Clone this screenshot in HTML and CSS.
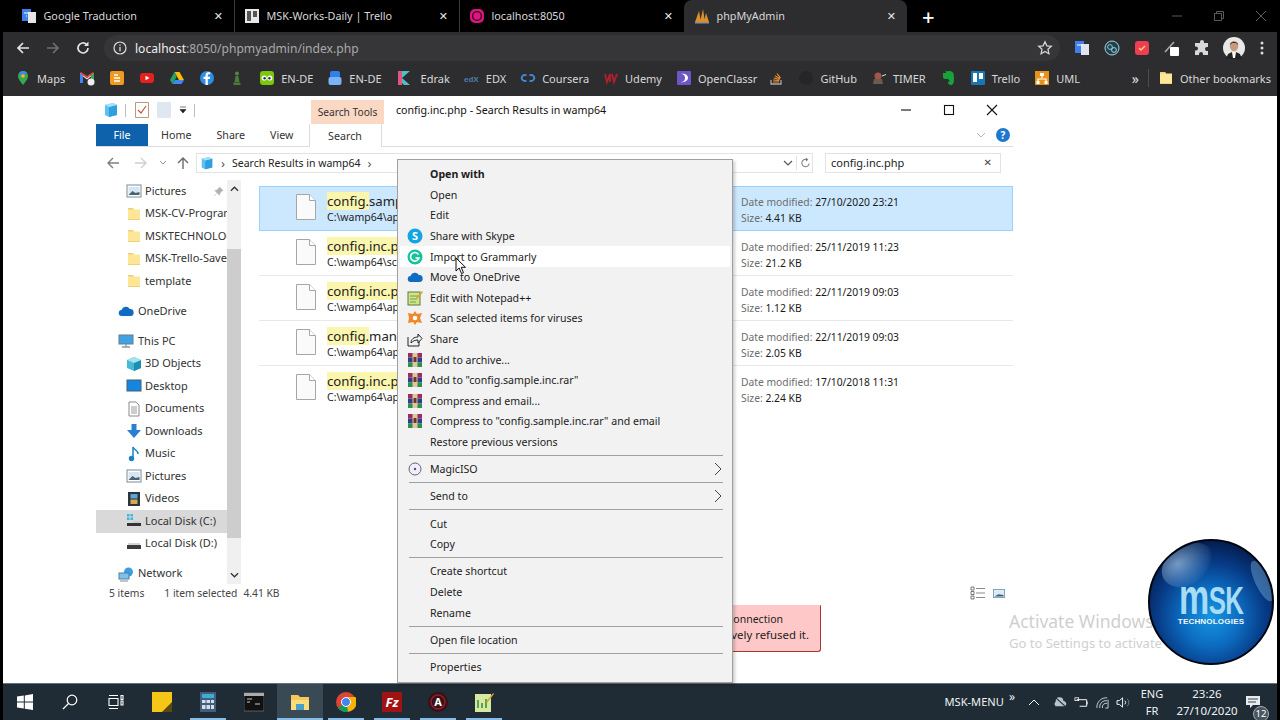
FILE: index.html
```html
<!DOCTYPE html>
<html lang="en">
<head>
<meta charset="utf-8">
<title>phpMyAdmin</title>
<link rel="stylesheet" href="styles.css">
</head>
<body>
<svg class="defs" width="0" height="0" aria-hidden="true">
  <symbol id="folder" viewBox="0 0 16 16"><path d="M2 2h5l1 1.500h6V14H2z" fill="#fde796"/><path d="M2 2h5l1 1.500H2z" fill="#ecd17a"/><path d="M2 14h12v-1H2z" fill="#ecd17a"/></symbol>
  <symbol id="file" viewBox="0 0 20 26"><path d="M.5.5h13l6 6v19H.5z" fill="#fafafa" stroke="#a6a6a6"/><path d="M13.5.5v6h6" fill="#fff" stroke="#a6a6a6"/></symbol>
  <symbol id="rar" viewBox="0 0 16 16"><rect x="1" y="1" width="14" height="4.500" fill="#a12a5a"/><rect x="1" y="5.500" width="14" height="5" fill="#2f3f8f"/><rect x="1" y="10.500" width="14" height="4.500" fill="#2f8f46"/><rect x="5.500" y="1" width="5" height="14" fill="#d8c9a0"/><rect x="6.500" y="5" width="3" height="5" fill="#7a3020"/></symbol>
  <symbol id="cube" viewBox="0 0 16 16"><path d="M2 3l8-2 4 2v10l-8 2-4-2z" fill="#5cc0f0"/><path d="M6 5l8-2v10l-8 2z" fill="#2f9fe0"/><path d="M2 3l8-2 4 2-8 2z" fill="#a8e0fa"/></symbol>
  <symbol id="picture" viewBox="0 0 16 16"><rect x="1" y="2" width="14" height="12" fill="#fff" stroke="#7a8a99"/><rect x="2.500" y="4" width="11" height="8" fill="#d5e6f2"/><path d="M2.500 12l4-4 3 2 4-1v3z" fill="#4a6170"/></symbol>
  <symbol id="cloud" viewBox="0 0 16 12"><path d="M4 11a3 3 0 0 1-.5-6A4.500 4.500 0 0 1 11.800 4 3.500 3.500 0 0 1 12.500 11z" fill="#0f6cc0"/></symbol>
  <symbol id="pc" viewBox="0 0 16 16"><rect x="1" y="2" width="14" height="9" fill="#3ea2e4" stroke="#6b7c88"/><path d="M4 14h8M8 11v3" stroke="#8a9aa6" stroke-width="1.400"/></symbol>
  <symbol id="drive" viewBox="0 0 16 16"><rect x="1" y="9" width="14" height="4" fill="#3b3b3b"/><rect x="2" y="7" width="12" height="2" fill="#d5d5d5"/></symbol>
</svg>

<div class="tabs">
  <div class="tab">
    <svg class="tab-ic" viewBox="0 0 16 16"><rect x="1" y="1" width="9" height="12" fill="#3f7fe8"/><rect x="7" y="4" width="8" height="11" fill="#e5e5e5"/><path d="M3 5h5M5 8h1" stroke="#fff"/></svg>
    <span class="tab-t">Google Traduction</span><span class="tab-x">✕</span>
  </div>
  <div class="tab tab-sep">
    <svg class="tab-ic" viewBox="0 0 16 16"><rect x="1" y="1" width="14" height="14" fill="#e8e8e8"/><rect x="3" y="3" width="4" height="10" fill="#555"/><rect x="9" y="3" width="4" height="6" fill="#555"/></svg>
    <span class="tab-t">MSK-Works-Daily | Trello</span><span class="tab-x">✕</span>
  </div>
  <div class="tab tab-sep">
    <svg class="tab-ic" viewBox="0 0 16 16"><rect x="1" y="1" width="14" height="14" rx="5" fill="#e0147e"/><circle cx="8" cy="8" r="4.400" fill="none" stroke="#2a0a1c" stroke-width="1.400"/></svg>
    <span class="tab-t">localhost:8050</span><span class="tab-x">✕</span>
  </div>
  <div class="tab tab-sep tab-active">
    <svg class="tab-ic" viewBox="0 0 16 16"><path d="M1 14L5 3l2 11zM6 14L9 1l2 13zM10 14l2-9 3 9z" fill="#d9902c"/><path d="M1 14h14v1.500H1z" fill="#8e8e9a"/></svg>
    <span class="tab-t">phpMyAdmin</span><span class="tab-x">✕</span>
  </div>
  <span class="tab-new">+</span>
  <div class="winctl">
    <svg class="winctl-ic" viewBox="0 0 12 12"><path d="M1 6h10" stroke="#5a5a5a"/></svg>
    <svg class="winctl-ic" viewBox="0 0 12 12"><path d="M1.500 3.500h7v7h-7zM3.500 3.500v-2h7v7h-2" fill="none" stroke="#5a5a5a"/></svg>
    <svg class="winctl-ic" viewBox="0 0 12 12"><path d="M1 1l10 10M11 1L1 11" stroke="#5a5a5a"/></svg>
  </div>
</div>

<div class="toolbar">
  <svg class="tb-ic tb-back" viewBox="0 0 16 16"><path d="M14 8H3M8 3L3 8l5 5" fill="none" stroke="#e3e3e3" stroke-width="1.700"/></svg>
  <svg class="tb-ic" viewBox="0 0 16 16"><path d="M2 8h11M8 3l5 5-5 5" fill="none" stroke="#6f6f6f" stroke-width="1.700"/></svg>
  <svg class="tb-ic" viewBox="0 0 16 16"><path d="M13 8a5 5 0 1 1-1.500-3.600" fill="none" stroke="#e3e3e3" stroke-width="1.700"/><path d="M13.500 1.500v4.400H9z" fill="#e3e3e3"/></svg>
  <div class="omni">
    <svg class="omni-i" viewBox="0 0 14 14"><circle cx="7" cy="7" r="6" fill="none" stroke="#ddd" stroke-width="1.200"/><path d="M7 6v4.200M7 3.400v1.400" stroke="#ddd" stroke-width="1.300"/></svg>
    <span class="omni-host">localhost</span><span class="omni-rest">:8050/phpmyadmin/index.php</span>
    <svg class="omni-star" viewBox="0 0 16 16"><path d="M8 1.800l1.900 4 4.400.5-3.300 3 .9 4.400L8 11.500l-3.900 2.200.9-4.400-3.300-3 4.400-.5z" fill="none" stroke="#d5d5d5" stroke-width="1.300"/></svg>
  </div>
  <div class="exts">
    <svg class="ext" viewBox="0 0 16 16"><rect x="1" y="1" width="9" height="12" fill="#3f7fe8"/><rect x="7" y="4" width="8" height="11" fill="#dfe5ee"/><path d="M3 5h5" stroke="#fff"/></svg>
    <svg class="ext" viewBox="0 0 16 16"><circle cx="8" cy="8" r="7" fill="#21404f" stroke="#a5d6e6"/><circle cx="6" cy="7" r="2.400" fill="none" stroke="#8bd0a8"/><circle cx="10" cy="10" r="2.400" fill="none" stroke="#a5d6e6"/></svg>
    <svg class="ext" viewBox="0 0 16 16"><rect x="1" y="1" width="14" height="14" rx="3" fill="#ee3f52"/><path d="M5 8l2 2 4-4" stroke="#ffd27a" fill="none" stroke-width="1.300"/></svg>
    <svg class="ext" viewBox="0 0 16 16"><path d="M1 12L10 2" stroke="#aaa" stroke-width="1.600"/><rect x="6" y="7" width="9" height="9" rx="1" fill="#fff"/></svg>
    <svg class="ext" viewBox="0 0 16 16"><path d="M6 2a2 2 0 0 1 4 0v1h4v4h-1a2 2 0 0 0 0 4h1v4H9v-1a2 2 0 0 0-4 0v1H1v-4.500h1a2 2 0 0 0 0-4H1V3h5z" fill="#d8d8d8"/></svg>
    <svg class="ext ext-av" viewBox="0 0 22 22"><circle cx="11" cy="11" r="11" fill="#e8e8e8"/><path d="M3 22l2-5 4-2h4l4 2 2 5z" fill="#222"/><path d="M9 15h4l-1 6h-2z" fill="#fff"/><ellipse cx="11" cy="9" rx="4.200" ry="5.200" fill="#c99a80"/><path d="M6.800 8C7 4 15 4 15.200 8L13 6H9z" fill="#2a2320"/></svg>
    <svg class="ext ext-dots" viewBox="0 0 4 16"><circle cx="2" cy="3" r="1.500" fill="#ddd"/><circle cx="2" cy="8" r="1.500" fill="#ddd"/><circle cx="2" cy="13" r="1.500" fill="#ddd"/></svg>
  </div>
</div>

<div class="bookmarks">
  <span class="bm"><svg class="bm-i" viewBox="0 0 16 16"><path d="M8 1a5 5 0 0 1 5 5c0 3.500-5 9-5 9S3 9.500 3 6a5 5 0 0 1 5-5z" fill="#34a853"/><path d="M4 3.500A5 5 0 0 1 12 2.500L8 7z" fill="#4285f4"/><circle cx="8" cy="6" r="1.800" fill="#fbbc04"/></svg>Maps</span>
  <span class="bm bm-only"><svg class="bm-i" viewBox="0 0 16 16"><path d="M1 3v10h3V6.500L8 9.500l4-3V13h3V3l-7 5z" fill="#e5e5e5"/><path d="M1 3l3 2.500V13H1z" fill="#4285f4"/><path d="M15 3l-3 2.500V13h3z" fill="#34a853"/><path d="M1 3l7 5 7-5-1-1-6 4-6-4z" fill="#ea4335"/><circle cx="12" cy="12" r="3.500" fill="#eee"/></svg></span>
  <span class="bm bm-only"><svg class="bm-i" viewBox="0 0 16 16"><rect x="1" y="1" width="14" height="14" rx="2" fill="#f09a20"/><path d="M5 5h4M5 8h6M5 11h6" stroke="#fff" stroke-width="1.400"/></svg></span>
  <span class="bm bm-only"><svg class="bm-i" viewBox="0 0 16 16"><rect x="1" y="3" width="14" height="10" rx="3" fill="#e8201c"/><path d="M6.500 5.800v4.400L10.500 8z" fill="#fff"/></svg></span>
  <span class="bm bm-only"><svg class="bm-i" viewBox="0 0 16 16"><path d="M5.500 2h5L15 10H10z" fill="#fbbc04"/><path d="M5.500 2L1 10l2.500 4L8 6z" fill="#1fa463"/><path d="M3.500 14h9L15 10H6z" fill="#4285f4"/></svg></span>
  <span class="bm bm-only"><svg class="bm-i" viewBox="0 0 16 16"><circle cx="8" cy="8" r="7" fill="#2f8de4"/><path d="M8.800 15V9h2l.3-2.300H8.800V5.400c0-.7.2-1.100 1.200-1.100h1.200V2.300C10 2.100 6.500 1.800 6.500 5v1.700H4.500V9h2v6z" fill="#fff"/></svg></span>
  <span class="bm bm-only"><svg class="bm-i" viewBox="0 0 16 16"><circle cx="8" cy="3.500" r="2" fill="#4f8a3c"/><path d="M6.500 6h3l1 6h-5zM4.500 12.500h7V15h-7z" fill="#4f7a3c"/></svg></span>
  <span class="bm"><svg class="bm-i" viewBox="0 0 16 16"><rect x="1" y="1" width="14" height="14" rx="3" fill="#7ac70c"/><circle cx="5.200" cy="8" r="2.600" fill="#fff"/><circle cx="10.800" cy="8" r="2.600" fill="#fff"/><circle cx="5.600" cy="8.300" r="1.200" fill="#234"/><circle cx="10.400" cy="8.300" r="1.200" fill="#234"/></svg>EN-DE</span>
  <span class="bm"><svg class="bm-i" viewBox="0 0 16 16"><rect x="3" y="1" width="10" height="7" rx="2" fill="#2f80ed"/><rect x="1.500" y="7" width="13" height="8" rx="2" fill="#79b4f7"/></svg>EN-DE</span>
  <span class="bm bm-edrak"><svg class="bm-i" viewBox="0 0 16 16"><path d="M2 1h4v14H2z" fill="#e0557e"/><path d="M6 1h8L6 8l8 7H8L6 13z" fill="#4cc0c5"/></svg>Edrak</span>
  <span class="bm"><svg class="bm-i" viewBox="0 0 16 16"><text x="0" y="12" class="bm-edx">edX</text></svg>EDX</span>
  <span class="bm"><svg class="bm-i" viewBox="0 0 16 16"><path d="M6.500 5.500a3 3 0 1 0 0 5M9.500 5.500a3 3 0 1 1 0 5" fill="none" stroke="#3f8fe0" stroke-width="1.800"/></svg>Coursera</span>
  <span class="bm"><svg class="bm-i" viewBox="0 0 16 16"><path d="M2 4l2 8 3-8v8M9 4l2 8 3-8" fill="none" stroke="#b3202c" stroke-width="1.800"/></svg>Udemy</span>
  <span class="bm bm-openc"><svg class="bm-i" viewBox="0 0 16 16"><rect x="1" y="1" width="14" height="14" rx="1" fill="#6d56c6"/><path d="M5 4c5-1 7 2 7 4s-3 5-7 4c3 0 4-2 4-4s-1-4-4-4z" fill="#fff"/></svg>OpenClassr</span>
  <span class="bm"><svg class="bm-i" viewBox="0 0 16 16"><path d="M3 10v4h10v-4" fill="none" stroke="#a8a8a8" stroke-width="1.300"/><path d="M5 12h6M5.200 10l6 .6M5.800 8l5.800 1.500M7 5.800l5 3M9 3.500l3.500 4.600" stroke="#e88a2a" stroke-width="1.200"/></svg></span>
  <span class="bm"><svg class="bm-i" viewBox="0 0 16 16"><circle cx="8" cy="8" r="7" fill="#262627"/></svg>GitHub</span>
  <span class="bm"><svg class="bm-i" viewBox="0 0 16 16"><circle cx="7" cy="6" r="3.500" fill="#a5564a"/><path d="M3 9h8l1 5H2z" fill="#6e5a55"/><path d="M11 6l4-1.500" stroke="#ddd"/></svg>TIMER</span>
  <span class="bm bm-only"><svg class="bm-i" viewBox="0 0 16 16"><path d="M3 3c1-1 3-2 6-2 4 0 5 2 5 7s-1 7-3 7-3-1-3-2.500 3-1 3 0M3 3h3V1M3 3v4c0 1 1 2 2 2h3" fill="#17a33b"/></svg></span>
  <span class="bm"><svg class="bm-i" viewBox="0 0 16 16"><rect x="1" y="1" width="14" height="14" rx="1" fill="#1676b8"/><rect x="3" y="3" width="4" height="9" fill="#fff"/><rect x="9" y="3" width="4" height="6" fill="#fff"/></svg>Trello</span>
  <span class="bm"><svg class="bm-i" viewBox="0 0 16 16"><rect x="1" y="1" width="14" height="14" fill="#e8921a"/><path d="M8 3v5M4 13V9h8v4" fill="none" stroke="#fff" stroke-width="1.200"/><rect x="6" y="3" width="4" height="3" fill="#fff"/><rect x="2.500" y="11" width="3" height="3" fill="#fff"/><rect x="10.500" y="11" width="3" height="3" fill="#fff"/></svg>UML</span>
  <div class="bm-end">
    <span class="bm-more">»</span>
    <span class="bm-div"></span>
    <span class="bm"><svg class="bm-i" viewBox="0 0 16 16"><use href="#folder"/></svg>Other bookmarks</span>
  </div>
</div>

<div class="page">
  <div class="win">
    <div class="win-title">
      <svg class="qat qat-cube" viewBox="0 0 16 16"><use href="#cube"/></svg>
      <span class="qat-sep"></span>
      <svg class="qat qat-doc" viewBox="0 0 14 16"><path d="M.5.500h13v15H.500z" fill="#fff" stroke="#b79c84"/><path d="M3 8l3 3 5-7" fill="none" stroke="#c25a3c" stroke-width="1.200"/></svg>
      <svg class="qat qat-page" viewBox="0 0 14 16"><rect width="14" height="16" fill="#dfe7f1"/></svg>
      <svg class="qat-drop" viewBox="0 0 8 8"><path d="M1 1h6M1 3.500h6L4 7z" fill="#222" stroke="#222" stroke-width=".6"/></svg>
      <span class="qat-sep qat-sep2"></span>
      <span class="ctx-tab">Search Tools</span>
      <span class="title-text">config.inc.php - Search Results in wamp64</span>
      <div class="win-ctl">
        <svg class="win-btn" viewBox="0 0 12 12"><path d="M1 6h10" stroke="#111" stroke-width="1.100"/></svg>
        <svg class="win-btn" viewBox="0 0 12 12"><rect x="1.500" y="1.500" width="9" height="9" fill="none" stroke="#111" stroke-width="1.100"/></svg>
        <svg class="win-btn" viewBox="0 0 12 12"><path d="M1 1l10 10M11 1L1 11" stroke="#111" stroke-width="1.100"/></svg>
      </div>
    </div>
    <div class="ribbon">
      <span class="rib rib-file">File</span>
      <span class="rib rib-home">Home</span>
      <span class="rib rib-share">Share</span>
      <span class="rib rib-view">View</span>
      <span class="rib rib-search">Search</span>
      <svg class="rib-chev" viewBox="0 0 10 6"><path d="M1 1l4 4 4-4" fill="none" stroke="#b5b5b5"/></svg>
      <svg class="rib-help" viewBox="0 0 14 14"><circle cx="7" cy="7" r="7" fill="#1e78d0"/><text x="7" y="11" class="rib-help-t">?</text></svg>
    </div>
    <div class="address">
      <svg class="nav-a nav-a1" viewBox="0 0 14 14"><path d="M13 7H2M7 2L2 7l5 5" fill="none" stroke="#7f7f7f" stroke-width="1.400"/></svg>
      <svg class="nav-a nav-a2" viewBox="0 0 14 14"><path d="M1 7h11M7 2l5 5-5 5" fill="none" stroke="#d0d0d0" stroke-width="1.400"/></svg>
      <svg class="nav-a nav-a3" viewBox="0 0 8 6"><path d="M1 1l3 3 3-3" fill="none" stroke="#9a9a9a"/></svg>
      <svg class="nav-a nav-a4" viewBox="0 0 14 14"><path d="M7 13V2M2 7l5-5 5 5" fill="none" stroke="#6a6a6a" stroke-width="1.400"/></svg>
      <div class="addr-box">
        <svg class="addr-cube" viewBox="0 0 16 16"><use href="#cube"/></svg>
        <span class="addr-gt">›</span>
        <span class="addr-text">Search Results in wamp64</span>
        <span class="addr-gt addr-gt2">›</span>
        <svg class="addr-chev" viewBox="0 0 10 6"><path d="M1 1l4 4 4-4" fill="none" stroke="#555" stroke-width="1.200"/></svg>
        <svg class="addr-refresh" viewBox="0 0 14 14"><path d="M11 7.500a4 4 0 1 1-2-4" fill="none" stroke="#777" stroke-width="1.100"/><path d="M7.500 1l2.500 2.500L7.500 5.500z" fill="#777"/></svg>
      </div>
      <div class="search-box"><span>config.inc.php</span><span class="search-x">✕</span></div>
    </div>
    <div class="main">
      <nav class="nav">
        <div class="nav-i"><svg class="ni" viewBox="0 0 16 16"><use href="#picture"/></svg><span class="nt">Pictures</span><svg class="pin" viewBox="0 0 12 12"><path d="M7 1l4 4-1.500.5L7.500 8 7 10 2 5l2-.5L6.500 2.500z M4 8l-3 3" fill="#b0b0b0" stroke="#b0b0b0" stroke-width=".6"/></svg></div>
        <div class="nav-i"><svg class="ni" viewBox="0 0 16 16"><use href="#folder"/></svg><span class="nt">MSK-CV-Program</span></div>
        <div class="nav-i"><svg class="ni" viewBox="0 0 16 16"><use href="#folder"/></svg><span class="nt">MSKTECHNOLOGIES</span></div>
        <div class="nav-i"><svg class="ni" viewBox="0 0 16 16"><use href="#folder"/></svg><span class="nt">MSK-Trello-Save</span></div>
        <div class="nav-i"><svg class="ni" viewBox="0 0 16 16"><use href="#folder"/></svg><span class="nt">template</span></div>
        <div class="nav-i nav-top nav-gap"><svg class="ni" viewBox="0 0 16 12"><use href="#cloud"/></svg><span class="nt">OneDrive</span></div>
        <div class="nav-i nav-top nav-gap"><svg class="ni" viewBox="0 0 16 16"><use href="#pc"/></svg><span class="nt">This PC</span></div>
        <div class="nav-i"><svg class="ni" viewBox="0 0 16 16"><path d="M8 1l7 3v8l-7 3-7-3V4z" fill="#49b7d6"/><path d="M8 7l7-3v8l-7 3z" fill="#1b8fb0"/><path d="M8 1l7 3-7 3-7-3z" fill="#a5e3ee"/></svg><span class="nt">3D Objects</span></div>
        <div class="nav-i"><svg class="ni" viewBox="0 0 16 16"><rect x="1" y="2" width="14" height="11" fill="#1486e0" stroke="#41607a"/></svg><span class="nt">Desktop</span></div>
        <div class="nav-i"><svg class="ni" viewBox="0 0 16 16"><path d="M3 1h7l3 3v11H3z" fill="#fff" stroke="#8a8a8a"/><path d="M5 6h6M5 8h6M5 10h6M5 12h6" stroke="#9a9a9a"/></svg><span class="nt">Documents</span></div>
        <div class="nav-i"><svg class="ni" viewBox="0 0 16 16"><path d="M5.500 1h5v6H15l-7 8-7-8h4.500z" fill="#2a7fd0"/></svg><span class="nt">Downloads</span></div>
        <div class="nav-i"><svg class="ni" viewBox="0 0 16 16"><circle cx="5.500" cy="12.500" r="2.700" fill="#1b82c4"/><path d="M7 12V1c1 3 5 3 5 7" fill="none" stroke="#1b82c4" stroke-width="1.500"/></svg><span class="nt">Music</span></div>
        <div class="nav-i"><svg class="ni" viewBox="0 0 16 16"><use href="#picture"/></svg><span class="nt">Pictures</span></div>
        <div class="nav-i"><svg class="ni" viewBox="0 0 16 16"><rect x="2" y="1" width="12" height="14" fill="#2a3540"/><rect x="4.500" y="3" width="7" height="4.500" fill="#5aa7d6"/><rect x="4.500" y="8.500" width="7" height="4.500" fill="#d8a94a"/></svg><span class="nt">Videos</span></div>
        <div class="nav-i nav-on"><svg class="ni" viewBox="0 0 16 16"><rect x="1" y="1" width="2.500" height="2.500" fill="#3fb6dc"/><rect x="4.500" y="1" width="2.500" height="2.500" fill="#3fb6dc"/><rect x="1" y="4.500" width="2.500" height="2.500" fill="#3fb6dc"/><rect x="4.500" y="4.500" width="2.500" height="2.500" fill="#3fb6dc"/><rect x="1" y="10" width="14" height="3" fill="#333"/><rect x="7" y="8" width="7" height="2" fill="#ccc"/></svg><span class="nt">Local Disk (C:)</span></div>
        <div class="nav-i"><svg class="ni" viewBox="0 0 16 16"><use href="#drive"/></svg><span class="nt">Local Disk (D:)</span></div>
        <div class="nav-i nav-top nav-gap"><svg class="ni" viewBox="0 0 16 16"><circle cx="10.500" cy="6" r="4.500" fill="#3d9ee0"/><rect x="1" y="7" width="10" height="6" fill="#7fc0ec" stroke="#4a7ea6"/><path d="M2 15h8" stroke="#888"/></svg><span class="nt">Network</span></div>
      </nav>
      <div class="sb">
        <svg class="sb-a" viewBox="0 0 10 6"><path d="M1 5l4-4 4 4" fill="none" stroke="#333" stroke-width="1.400"/></svg>
        <div class="sb-thumb"></div>
        <svg class="sb-a" viewBox="0 0 10 6"><path d="M1 1l4 4 4-4" fill="none" stroke="#333" stroke-width="1.400"/></svg>
      </div>
      <div class="results">
        <div class="row row-sel">
          <svg class="r-ic" viewBox="0 0 20 26"><use href="#file"/></svg>
          <div class="r-name"><div class="r-t"><mark>config.</mark>sample.inc.php</div><div class="r-p">C:\wamp64\apps\phpmyadmin5.0.2</div></div>
          <div class="r-d"><div><span class="k">Date modified:</span> 27/10/2020 23:21</div><div><span class="k">Size:</span> 4.41 KB</div></div>
        </div>
        <div class="row row-line">
          <svg class="r-ic" viewBox="0 0 20 26"><use href="#file"/></svg>
          <div class="r-name"><div class="r-t"><mark>config.inc.php</mark></div><div class="r-p">C:\wamp64\scripts</div></div>
          <div class="r-d"><div><span class="k">Date modified:</span> 25/11/2019 11:23</div><div><span class="k">Size:</span> 21.2 KB</div></div>
        </div>
        <div class="row row-line">
          <svg class="r-ic" viewBox="0 0 20 26"><use href="#file"/></svg>
          <div class="r-name"><div class="r-t"><mark>config.inc.php</mark></div><div class="r-p">C:\wamp64\apps\adminer</div></div>
          <div class="r-d"><div><span class="k">Date modified:</span> 22/11/2019 09:03</div><div><span class="k">Size:</span> 1.12 KB</div></div>
        </div>
        <div class="row row-line">
          <svg class="r-ic" viewBox="0 0 20 26"><use href="#file"/></svg>
          <div class="r-name"><div class="r-t"><mark>config.</mark>manifest.php</div><div class="r-p">C:\wamp64\apps\phpsysinfo</div></div>
          <div class="r-d"><div><span class="k">Date modified:</span> 22/11/2019 09:03</div><div><span class="k">Size:</span> 2.05 KB</div></div>
        </div>
        <div class="row">
          <svg class="r-ic" viewBox="0 0 20 26"><use href="#file"/></svg>
          <div class="r-name"><div class="r-t"><mark>config.inc.php</mark></div><div class="r-p">C:\wamp64\apps\phpmyadmin</div></div>
          <div class="r-d"><div><span class="k">Date modified:</span> 17/10/2018 11:31</div><div><span class="k">Size:</span> 2.24 KB</div></div>
        </div>
      </div>
    </div>
    <div class="status">
      <span class="st-a">5 items</span><span class="st-b">1 item selected</span><span class="st-c">4.41 KB</span>
      <div class="st-views">
        <svg class="st-v" viewBox="0 0 16 14"><path d="M1 1h3v3H1zM1 5.500h3v3H1zM1 10h3v3H1z" fill="none" stroke="#777"/><path d="M6 2.500h9M6 7h9M6 11.500h9" stroke="#8a8a8a"/></svg>
        <svg class="st-v st-v2" viewBox="0 0 16 12"><rect x=".5" y=".5" width="15" height="11" fill="#dcebf5" stroke="#5e90ad"/><path d="M2 10l5-3 7 1v2z" fill="#48606e"/></svg>
      </div>
    </div>
  </div>

  <div class="err"><div class="err-l1">No connection</div><div class="err-l2">actively refused it.</div></div>

  <div class="activate"><div class="act-1">Activate Windows</div><div class="act-2">Go to Settings to activate Windows.</div></div>

  <div class="menu">
    <div class="mi mi-b">Open with</div>
    <div class="mi">Open</div>
    <div class="mi">Edit</div>
    <div class="mi"><svg class="mic" viewBox="0 0 16 16"><circle cx="8" cy="8" r="7.500" fill="#12a5e4"/><text x="8" y="12" class="mic-s">S</text></svg>Share with Skype</div>
    <div class="mi mi-hover"><svg class="mic" viewBox="0 0 16 16"><circle cx="8" cy="8" r="7.500" fill="#15c39a"/><path d="M11.500 5.500A4.300 4.300 0 1 0 12 9H8.500" fill="none" stroke="#fff" stroke-width="1.600"/></svg>Import to Grammarly</div>
    <div class="mi"><svg class="mic" viewBox="0 0 16 12"><use href="#cloud"/></svg>Move to OneDrive</div>
    <div class="mi"><svg class="mic" viewBox="0 0 16 16"><rect x="1" y="2" width="12" height="13" fill="#cfe58c" stroke="#5c7a3a"/><path d="M3 6h8M3 9h7M3 12h6" stroke="#7f9a4a"/><path d="M9 8l6-7 1 1-6 7z" fill="#d9a02a"/></svg>Edit with Notepad++</div>
    <div class="mi"><svg class="mic" viewBox="0 0 16 16"><path d="M8 1l2 3 5-1-2 5 2 5-5-1-2 3-2-3-5 1 1-5L1 3l5 1z" fill="#f0882a"/><circle cx="8" cy="8" r="2.300" fill="#fff"/></svg>Scan selected items for viruses</div>
    <div class="mi"><svg class="mic" viewBox="0 0 16 16"><path d="M1 6v9h11v-4M4 12c0-4 3-6 7-6V3l4 4.500L11 12V9c-3 0-5 1-7 3z" fill="none" stroke="#222"/></svg>Share</div>
    <div class="mi"><svg class="mic" viewBox="0 0 16 16"><use href="#rar"/></svg>Add to archive...</div>
    <div class="mi"><svg class="mic" viewBox="0 0 16 16"><use href="#rar"/></svg>Add to "config.sample.inc.rar"</div>
    <div class="mi"><svg class="mic" viewBox="0 0 16 16"><use href="#rar"/></svg>Compress and email...</div>
    <div class="mi"><svg class="mic" viewBox="0 0 16 16"><use href="#rar"/></svg>Compress to "config.sample.inc.rar" and email</div>
    <div class="mi">Restore previous versions</div>
    <div class="ms"></div>
    <div class="mi"><svg class="mic" viewBox="0 0 16 16"><circle cx="8" cy="8" r="6" fill="#eef" stroke="#667"/><circle cx="8" cy="8" r="1.200" fill="#556"/></svg>MagicISO<svg class="marr" viewBox="0 0 8 14"><path d="M1 1l6 6-6 6" fill="none" stroke="#444"/></svg></div>
    <div class="ms"></div>
    <div class="mi">Send to<svg class="marr" viewBox="0 0 8 14"><path d="M1 1l6 6-6 6" fill="none" stroke="#444"/></svg></div>
    <div class="ms"></div>
    <div class="mi">Cut</div>
    <div class="mi">Copy</div>
    <div class="ms"></div>
    <div class="mi">Create shortcut</div>
    <div class="mi">Delete</div>
    <div class="mi">Rename</div>
    <div class="ms"></div>
    <div class="mi">Open file location</div>
    <div class="ms"></div>
    <div class="mi">Properties</div>
  </div>

  <svg class="cursor" viewBox="0 0 12 18"><path d="M1 1v13l3.200-3 2.300 5.500 2-.8-2.300-5.400H10.500z" fill="#fff" stroke="#111"/></svg>

  <div class="logo">
    <div class="logo-gloss"></div>
    <div class="logo-gloss2"></div>
    <div class="logo-msk"><span class="logo-m">m</span>SK</div>
    <div class="logo-tech">TECHNOLOGIES</div>
  </div>
</div>

<div class="taskbar">
  <span class="tk tk-start"><svg class="tk-i" viewBox="0 0 16 16"><path d="M0 2.500l6.800-1v6H0zM7.800 1.400L16 0v7.500H7.800zM0 8.500h6.800v6l-6.800-1zM7.800 8.500H16V16l-8.200-1.300z" fill="#fff"/></svg></span>
  <span class="tk"><svg class="tk-i" viewBox="0 0 16 16"><circle cx="10" cy="6" r="4.800" fill="none" stroke="#fff" stroke-width="1.200"/><path d="M6.500 9.500L1 15" stroke="#fff" stroke-width="1.200"/></svg></span>
  <span class="tk"><svg class="tk-i" viewBox="0 0 16 16"><path d="M1 4.500h9v7H1zM1 1.500h9M1 14.500h9M13 1.500h2v4h-2zM13 7h2v4h-2z" fill="none" stroke="#fff" stroke-width="1.100"/></svg></span>
  <span class="tk"><svg class="tk-i tk-big" viewBox="0 0 20 20"><rect width="20" height="20" fill="#f5c518"/><path d="M20 10v10H10z" fill="#5a4a10"/></svg></span>
  <span class="tk tk-run"><svg class="tk-i tk-big" viewBox="0 0 20 20"><rect x="2" width="16" height="20" fill="#3f5f7d"/><rect x="4" y="2" width="12" height="4" fill="#46a9d6"/><path d="M4 8h3.500v3H4zM8.500 8H12v3H8.500zM13 8h3v3h-3zM4 13h3.500v4H4zM8.500 13H12v4H8.500zM13 13h3v4h-3z" fill="#d5dde5"/></svg></span>
  <span class="tk"><svg class="tk-i tk-big" viewBox="0 0 20 20"><rect y="1" width="20" height="18" fill="#111" stroke="#888" stroke-width=".6"/><rect y="1" width="20" height="3" fill="#aaa"/><path d="M3 7h5M3 10h3M11 12h5" stroke="#ccc"/></svg></span>
  <span class="tk tk-active"><svg class="tk-i tk-big" viewBox="0 0 20 20"><path d="M1 3h7l2 2h9v13H1z" fill="#f5c85a"/><path d="M1 8h18v10H1z" fill="#fbdc7d"/><rect x="6" y="12" width="8" height="6" fill="#4a9fc9"/></svg></span>
  <span class="tk tk-run"><svg class="tk-i tk-big" viewBox="0 0 20 20"><circle cx="10" cy="10" r="10" fill="#db4437"/><path d="M10 10L2 16a10 10 0 0 0 10 3.800z" fill="#0f9d58"/><path d="M10 5h9.500a10 10 0 0 1-7.500 14.800z" fill="#f4b400"/><circle cx="10" cy="10" r="4.500" fill="#4285f4" stroke="#fff"/></svg></span>
  <span class="tk tk-run"><svg class="tk-i tk-big" viewBox="0 0 20 20"><rect width="20" height="20" fill="#a31212"/><text x="10" y="15" class="tk-fz">Fz</text></svg></span>
  <span class="tk tk-run"><svg class="tk-i tk-big" viewBox="0 0 20 20"><circle cx="10" cy="10" r="10" fill="#3a0f16"/><circle cx="10" cy="10" r="7" fill="none" stroke="#8c1f2e" stroke-width="1.500"/><text x="10" y="14" class="tk-a">A</text></svg></span>
  <span class="tk tk-run"><svg class="tk-i tk-big" viewBox="0 0 20 20"><rect x="1" y="2" width="16" height="18" fill="#d8e8a0"/><path d="M4 16v-8M8 16v-5M12 16v-9" stroke="#2d8a3c" stroke-width="1.500"/><path d="M12 10l7-9 1 1-7 9z" fill="#d9a02a"/></svg></span>
  <div class="tray">
    <span class="tr-menu">MSK-MENU</span>
    <span class="tr-more">»</span>
    <svg class="tr-up" viewBox="0 0 12 8"><path d="M1 7l5-5 5 5" fill="none" stroke="#fff"/></svg>
    <svg class="tr-i" viewBox="0 0 16 12"><path d="M3 10a3 3 0 0 1 0-5 4 4 0 0 1 8-1 3.500 3.500 0 0 1 2 6z" fill="#b9c2c8"/><path d="M3 1l11 10" stroke="#1f2c35" stroke-width="1.200"/></svg>
    <svg class="tr-i" viewBox="0 0 16 12"><path d="M3 3h10.500v7H6" fill="none" stroke="#fff"/><path d="M14 5v3" stroke="#fff"/><rect x="1" y="1" width="4" height="3" fill="none" stroke="#fff" stroke-width=".8"/></svg>
    <svg class="tr-i" viewBox="0 0 16 14"><path d="M2 13a10 10 0 0 1 11-11M5 13a7 7 0 0 1 8-8M8 13a4 4 0 0 1 5-5" fill="none" stroke="#cfd6da"/><path d="M14 4v9h-3" stroke="#cfd6da" fill="none"/></svg>
    <svg class="tr-i" viewBox="0 0 16 14"><path d="M1 5h2.500L7 2v10L3.500 9H1z" fill="none" stroke="#fff"/><path d="M9.500 5a3 3 0 0 1 0 4" fill="none" stroke="#fff"/><path d="M12 3a6 6 0 0 1 0 8" fill="none" stroke="#7b868d"/></svg>
    <div class="tr-lang"><span>ENG</span><span>FR</span></div>
    <div class="tr-clock"><span>23:26</span><span>27/10/2020</span></div>
    <div class="tr-note"><svg class="tr-note-i" viewBox="0 0 18 14"><path d="M1 1h14v9H8l-3 3v-3H1z" fill="#e8ecee"/><path d="M3 4h10M3 7h8" stroke="#39454e"/></svg><span class="tr-badge">12</span></div>
  </div>
</div>
</body>
</html>
```

FILE: styles.css
```css
* { box-sizing: border-box; }
html, body { margin: 0; padding: 0; }
body {
  width: 1280px;
  height: 720px;
  overflow: hidden;
  background: #000;
  padding: 0 3px;
  display: flex;
  flex-direction: column;
  font-family: "Noto Sans", "Open Sans", sans-serif;
  font-size: 11.5px;
  color: #1c1c1c;
}
.defs { position: absolute; }

/* browser tabs */
.tabs { height: 32px; display: flex; align-items: center; padding-left: 6px; color: #d8d8d8; flex: none; }
.tab { width: 225px; height: 32px; display: flex; align-items: center; padding: 0 11px 0 11px; border-left: 1px solid transparent; }
.tab-sep { border-left-color: #3a3a3a; padding-left: 9px; }
.tab-active { background: #2d2d2f; width: 223px; border-radius: 8px 8px 0 0; border-left-color: transparent; }
.tab-ic { width: 16px; height: 16px; flex: none; }
.tab-t { margin-left: 6.5px; padding-bottom: 1px; font-size: 10.8px; flex: 1; white-space: nowrap; }
.tab-x { color: #e6e6e6; font-size: 11px; font-family: "DejaVu Sans", sans-serif; font-weight: 700; }
.tab-new { color: #fff; font-size: 22px; font-weight: 500; margin-left: 15px; line-height: 1; }
.winctl { margin-left: auto; display: flex; gap: 30px; padding-right: 10px; }
.winctl-ic { width: 12px; height: 12px; }

/* toolbar */
.toolbar { height: 31px; background: #2d2d2f; display: flex; align-items: center; flex: none; }
.tb-ic { width: 16px; height: 16px; margin-right: 14px; flex: none; }
.tb-back { margin-left: 12px; }
.omni { width: 956px; height: 26px; border-radius: 13px; background: #363638; display: flex; align-items: center; padding: 0 7px 0 9px; margin-left: -1px; }
.omni-i { width: 14px; height: 14px; margin-right: 8px; }
.omni-host { color: #f0f0f0; font-size: 12.1px; padding-top: 2px; }
.omni-rest { color: #a9a9a9; font-size: 12.1px; padding-top: 2px; }
.omni-star { width: 16px; height: 16px; margin-left: auto; }
.exts { display: flex; align-items: center; margin-left: 14px; gap: 14px; }
.ext { width: 16px; height: 16px; }
.ext-av { width: 22px; height: 22px; margin-left: -1px; }
.ext-dots { width: 4px; margin-left: 1px; }

/* bookmarks */
.bookmarks { height: 33px; padding: 0 0 3px 12px; background: #2d2d2f; display: flex; align-items: center; gap: 14px; color: #d8d8d8; font-size: 11px; flex: none; }
.bm { display: flex; align-items: center; gap: 6px; white-space: nowrap; }
.bm-edrak { gap: 9px; }
.bm-openc { margin-right: -3px; }
.bm-i { width: 16px; height: 16px; flex: none; }
.bm-edx { font-size: 8px; fill: #4a7fb0; font-family: "Liberation Sans", sans-serif; font-weight: 700; }
.bm-end { margin-left: auto; display: flex; align-items: center; gap: 9px; padding-right: 6px; }
.bm-more { font-size: 14px; color: #e0e0e0; }
.bm-div { width: 1px; height: 18px; background: #4c4c4c; }

/* page */
.page { position: relative; flex: 1; background: #fff; min-height: 0; }
.win { margin-left: 93px; width: 917px; height: 506px; display: flex; flex-direction: column; background: #fff; }

.win-title { height: 28px; display: flex; align-items: center; flex: none; }
.qat { flex: none; }
.qat-cube { width: 16px; height: 16px; margin-left: 7px; }
.qat-sep { width: 1px; height: 13px; background: #bcbcbc; margin-left: 6px; }
.qat-doc { width: 14px; height: 16px; margin-left: 9px; }
.qat-page { width: 14px; height: 16px; margin-left: 8px; }
.qat-drop { width: 8px; height: 8px; margin-left: 8px; }
.qat-sep2 { margin-left: 7px; }
.ctx-tab { width: 73px; height: 24px; margin-top: 4px; margin-left: 116px; background: #fbd8c4; display: flex; align-items: center; justify-content: center; font-size: 10.2px; color: #333; }
.title-text { margin-left: 12px; font-size: 10.65px; color: #111; white-space: nowrap; }
.win-ctl { margin-left: auto; display: flex; gap: 31px; padding-right: 15px; }
.win-btn { width: 12px; height: 12px; }

.ribbon { height: 23px; display: flex; align-items: stretch; border-bottom: 1px solid #dcdcdc; flex: none; font-size: 10.7px; color: #333; }
.rib { display: flex; align-items: center; justify-content: center; }
.rib-file { width: 52px; background: #0e62ab; color: #fff; }
.rib-home { margin-left: 13px; }
.rib-share { margin-left: 25px; }
.rib-view { margin-left: 25px; }
.rib-search { width: 73px; margin-left: 15px; background: #fff; border-left: 1px solid #dcdcdc; border-right: 1px solid #dcdcdc; margin-bottom: -1px; }
.rib-chev { width: 10px; height: 6px; margin-left: auto; align-self: center; }
.rib-help { width: 14px; height: 14px; margin: 0 3px 0 10px; align-self: center; }
.rib-help-t { font-size: 10px; fill: #fff; text-anchor: middle; font-weight: 700; }

.address { height: 33px; padding-bottom: 2px; display: flex; align-items: center; flex: none; }
.nav-a { flex: none; }
.nav-a1 { width: 14px; height: 14px; margin-left: 10px; }
.nav-a2 { width: 14px; height: 14px; margin-left: 14px; }
.nav-a3 { width: 8px; height: 6px; margin-left: 11px; }
.nav-a4 { width: 14px; height: 14px; margin-left: 9px; }
.addr-box { width: 617px; height: 20px; margin-left: 6px; border: 1px solid #e3e3e3; display: flex; align-items: center; padding-left: 3px; font-size: 10.5px; }
.addr-cube { width: 14px; height: 14px; }
.addr-gt { margin-left: 7px; font-size: 13px; color: #555; }
.addr-text { margin-left: 7px; white-space: nowrap; color: #222; }
.addr-gt2 { margin-left: 7px; }
.addr-chev { width: 10px; height: 6px; margin-left: auto; margin-right: 1px; }
.addr-refresh { width: 16px; height: 14px; margin-left: 2px; padding-left: 2px; border-left: 1px solid #e3e3e3; }
.search-box { width: 176px; height: 20px; margin-left: 12px; border: 1px solid #e3e3e3; display: flex; align-items: center; justify-content: space-between; padding: 0 8px 0 5px; font-size: 11px; color: #222; }
.search-x { font-family: "DejaVu Sans", sans-serif; font-size: 10px; color: #444; font-weight: 700; }

.main { height: 404px; display: flex; flex: none; }
.nav { width: 131px; flex: none; font-size: 11px; color: #333; overflow: hidden; }
.nav-i { height: 22.5px; display: flex; align-items: center; padding-left: 30px; white-space: nowrap; overflow: hidden; position: relative; }
.ni { width: 16px; height: 16px; flex: none; }
.nt { margin-left: 3px; padding-bottom: 2px; }
.nav-top { padding-left: 22px; }
.nav-top .nt { margin-left: 4px; }
.nav-gap { margin-top: 7.5px; }
.nav-on { background: #d9d9d9; }
.pin { position: absolute; left: 117px; width: 11px; height: 11px; }

.sb { width: 14px; flex: none; background: #f0f0f0; display: flex; flex-direction: column; align-items: center; justify-content: space-between; padding: 6px 0; }
.sb-a { width: 9px; height: 6px; }
.sb-thumb { width: 14px; height: 289px; background: #cdcdcd; margin-top: 26px; margin-bottom: 4px; }

.results { flex: 1; padding: 6px 0 0 18px; min-width: 0; }
.row { height: 45px; display: grid; grid-template-columns: 68px 414px 1fr; border: 1px solid transparent; border-width: 0 0 1px; }
.row-sel { background: #cce8ff; border: 1px solid #99d1ff; }
.row-line { border-bottom-color: #e8e8e8; }
.r-ic { width: 20px; height: 26px; margin: 8px 0 0 37px; }
.r-name { padding-top: 6px; overflow: hidden; white-space: nowrap; }
.r-t { height: 18px; line-height: 18px; font-size: 13.2px; color: #222; }
.r-t mark { background: #fbf6ae; color: inherit; }
.r-p { height: 14px; line-height: 14px; font-size: 10.5px; color: #222; }
.r-d { padding-top: 8px; font-size: 10.3px; line-height: 16px; color: #1a1a1a; white-space: nowrap; }
.k { color: #6d6d6d; }
.row-sel .r-ic { margin: 7px 0 0 36px; }
.row-sel .r-name { padding-top: 5px; margin-left: -1px; }
.row-sel .r-d { padding-top: 7px; margin-left: -1px; }

.status { height: 18px; display: flex; align-items: center; font-size: 10.3px; color: #444; flex: none; white-space: nowrap; }
.st-a { margin-left: 13px; }
.st-b { margin-left: 20px; }
.st-c { margin-left: 6px; }
.st-views { margin-left: auto; display: flex; align-items: center; gap: 7px; padding-right: 8px; }
.st-v { width: 16px; height: 14px; }
.st-v2 { width: 12px; height: 9px; }

/* overlays */
.err { position: absolute; left: 597px; top: 509px; width: 221px; height: 47px; background: #ffc8c8; border: 1px solid #a33; border-left: 0; border-top-color: #ffc8c8; border-radius: 0 0 3px 0; text-align: right; padding: 5px 11px 0 0; font-size: 10.5px; line-height: 16px; color: #222; white-space: nowrap; }
.err-l1 { padding-right: 26px; }
.err-l2 { font-size: 11.4px; }
.activate { position: absolute; left: 1006px; top: 513px; color: #cfcfcf; white-space: nowrap; }
.act-1 { font-size: 17.5px; line-height: 24px; }
.act-2 { font-size: 13px; line-height: 20px; }

.menu { position: absolute; left: 394px; top: 63px; width: 336px; height: 524px; background: #f2f2f2; border: 1px solid #a0a0a0; padding: 4px 2px 0; box-shadow: 2px 2px 3px rgba(0,0,0,.2); font-size: 10.6px; color: #1c1c1c; }
.mi { height: 20.6px; display: flex; align-items: center; padding-left: 30px; position: relative; white-space: nowrap; }
.mi-b { font-weight: 700; }
.mi-hover { background: #fff; }
.mic { position: absolute; left: 7px; width: 16px; height: 16px; }
.mic-s { font-size: 11px; font-weight: 700; fill: #fff; text-anchor: middle; }
.ms { height: 1px; background: #a0a0a0; margin: 2.8px 7px 2.8px 9px; }
.marr { position: absolute; right: 8px; width: 8px; height: 14px; }
.cursor { position: absolute; left: 452px; top: 161px; width: 12px; height: 18px; }

.logo { position: absolute; left: 1145px; top: 443px; width: 126px; height: 126px; border-radius: 50%; border: 2px solid #020510; background: radial-gradient(circle at 50% 62%, #1695e0 0, #0c6cc0 30%, #073c88 55%, #041a48 80%, #01061a 100%); display: flex; flex-direction: column; align-items: center; justify-content: center; overflow: hidden; }
.logo-msk { font-family: "Liberation Sans", sans-serif; font-weight: 700; font-size: 38px; line-height: 30px; color: #a6dcf5; margin-top: 5px; letter-spacing: -1px; position: relative; transform: scaleX(.68); white-space: nowrap; }
.logo-m { font-size: 50px; }
.logo-tech { font-family: "Liberation Sans", sans-serif; font-weight: 700; font-size: 8px; line-height: 12px; color: #f2f8fc; letter-spacing: .2px; position: relative; }
.logo-gloss { position: absolute; left: 10px; top: 4px; width: 56px; height: 40px; border-radius: 50%; background: radial-gradient(ellipse at 35% 35%, rgba(190,225,250,.6), rgba(120,180,230,.12) 65%, transparent 72%); transform: rotate(-30deg); }
.logo-gloss2 { position: absolute; right: 3px; top: 18px; width: 14px; height: 44px; border-radius: 50%; background: rgba(150,210,245,.35); transform: rotate(-25deg); }

/* taskbar */
.taskbar { height: 37px; background: #1f2c35; border-top: 1px solid #65717a; display: flex; align-items: stretch; flex: none; color: #eef2f4; font-size: 12px; }
.tk { width: 46px; display: flex; align-items: center; justify-content: center; position: relative; flex: none; }
.tk-start { width: 44px; }
.tk-i { width: 16px; height: 16px; }
.tk-big { width: 20px; height: 20px; }
.tk-run::after, .tk-active::after { content: ""; position: absolute; left: 5px; right: 5px; bottom: 0; height: 2px; background: #86bde6; }
.tk-active { background: #3a4a55; }
.tk-active::after { left: 0; right: 0; }
.tk-fz { font-size: 13px; font-weight: 700; fill: #fff; text-anchor: middle; font-style: italic; }
.tk-a { font-size: 11px; font-weight: 700; fill: #fff; text-anchor: middle; }
.tray { margin-left: auto; display: flex; align-items: center; }
.tr-menu { font-size: 11.1px; white-space: nowrap; padding-bottom: 2px; }
.tr-more { font-size: 12px; margin: -12px 9px 0 5px; }
.tr-up { width: 12px; height: 8px; margin: 0 10px 0 4px; }
.tr-i { width: 15px; height: 13px; margin: 0 3px; }
.tr-lang { width: 30px; display: flex; flex-direction: column; align-items: center; line-height: 17px; font-size: 11px; margin-left: 3px; }
.tr-clock { width: 66px; display: flex; flex-direction: column; align-items: center; line-height: 17px; font-size: 11.5px; margin-left: 7px; }
.tr-note { width: 37px; position: relative; display: flex; align-items: center; padding-left: 5px; }
.tr-note-i { width: 18px; height: 14px; }
.tr-badge { position: absolute; left: 13px; top: 11px; width: 16px; height: 16px; border-radius: 50%; background: #49565f; font-size: 9.5px; line-height: 14px; text-align: center; color: #fff; border: 1px solid #aab; }
```
